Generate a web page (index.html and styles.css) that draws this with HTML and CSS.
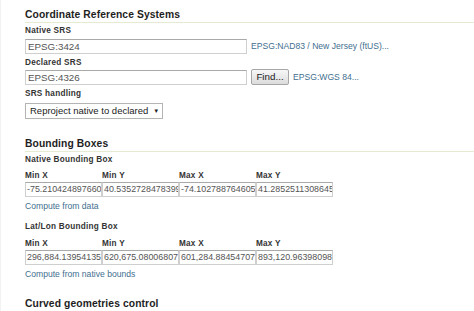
FILE: index.html
```html
<!DOCTYPE html>
<html>
<head>
<meta charset="utf-8">
<link rel="stylesheet" href="styles.css">
</head>
<body>
<div class="page">
  <section class="section">
    <h2 class="title">Coordinate Reference Systems</h2>
    <div class="label first">Native SRS</div>
    <div class="row">
      <div class="input wide">EPSG:3424</div>
      <span class="link">EPSG:NAD83 / New Jersey (ftUS)...</span>
    </div>
    <div class="label">Declared SRS</div>
    <div class="row">
      <div class="input wide">EPSG:4326</div>
      <div class="button">Find...</div>
      <span class="link">EPSG:WGS 84...</span>
    </div>
    <div class="label">SRS handling</div>
    <div class="select"><span>Reproject native to declared</span><span class="arrow">▼</span></div>
  </section>
  <section class="section bb">
    <h2 class="title">Bounding Boxes</h2>
    <div class="label first">Native Bounding Box</div>
    <div class="grid g1">
      <div class="label col">Min X</div><div class="label col">Min Y</div><div class="label col">Max X</div><div class="label col">Max Y</div>
      <div class="input cell">-75.2104248976605</div><div class="input cell">40.53527284783995</div><div class="input cell">-74.102788764605</div><div class="input cell">41.28525113086457</div>
    </div>
    <div class="link compute c1">Compute from data</div>
    <div class="label ll">Lat/Lon Bounding Box</div>
    <div class="grid g2">
      <div class="label col">Min X</div><div class="label col">Min Y</div><div class="label col">Max X</div><div class="label col">Max Y</div>
      <div class="input cell">296,884.13954135</div><div class="input cell">620,675.08006807</div><div class="input cell">601,284.88454707</div><div class="input cell">893,120.96398098</div>
    </div>
    <div class="link compute c2">Compute from native bounds</div>
  </section>
  <section class="section cg">
    <h2 class="title">Curved geometries control</h2>
  </section>
</div>
</body>
</html>
```
FILE: styles.css
```css
html, body { margin: 0; padding: 0; background: #fff; }
body { font-family: "Liberation Sans", Arial, sans-serif; color: #222; overflow: hidden; }
.page { width: 474px; height: 311px; box-sizing: border-box; padding-left: 24px; padding-top: 8px; border-left: 1px solid #f2f2f2; overflow: hidden; }
.section { display: flex; flex-direction: column; align-items: flex-start; }
.title { margin: 0; font-size: 10.3px; font-weight: bold; line-height: 14px; color: #1e1e1e; width: 449px; border-bottom: 1px solid #e6ead2; letter-spacing: 0.1px; }
.label { font-size: 8.2px; font-weight: bold; color: #333; line-height: 11px; margin-top: 3px; margin-bottom: 1px; letter-spacing: 0.25px; }
.label.first { margin-top: 2px; margin-bottom: 3px; }
.row { display: flex; align-items: center; gap: 4px; min-height: 15px; }
.input { box-sizing: border-box; height: 15px; border: 1px solid #cfcfcf; border-top-color: #a9a9a9; font-size: 9.8px; line-height: 13px; color: #555; padding: 0 2px; white-space: nowrap; overflow: hidden; background: #fff; }
.wide { width: 222px; }
.button { box-sizing: border-box; height: 16px; width: 38px; border: 1px solid #a6a6a6; border-radius: 2px; background: linear-gradient(#f7f7f7, #dcdcdc); font-size: 9.8px; line-height: 14px; text-align: center; color: #222; }
.link { font-size: 8.6px; color: #3f6f8f; white-space: nowrap; line-height: 11px; }
.select { box-sizing: border-box; display: flex; align-items: center; gap: 5px; height: 16px; width: 138px; margin-top: 3px; border: 1px solid #b4b4b4; font-size: 9.5px; line-height: 14px; padding: 0 4px; color: #222; background: #fff; white-space: nowrap; }
.arrow { font-size: 6px; line-height: 14px; }
.bb { margin-top: 18px; }
.grid { display: grid; grid-template-columns: repeat(4, 77px); column-gap: 0; }
.g1 { margin-top: 2px; }
.g2 { margin-top: 5px; }
.col { margin: 0 0 1px 0; }
.cell { width: 77px; padding: 0 1px; font-size: 8.9px; }
.c1 { margin-top: 4px; }
.c2 { margin-top: 4px; }
.label.ll { margin-top: 9px; }
.cg { margin-top: 17px; }
```
